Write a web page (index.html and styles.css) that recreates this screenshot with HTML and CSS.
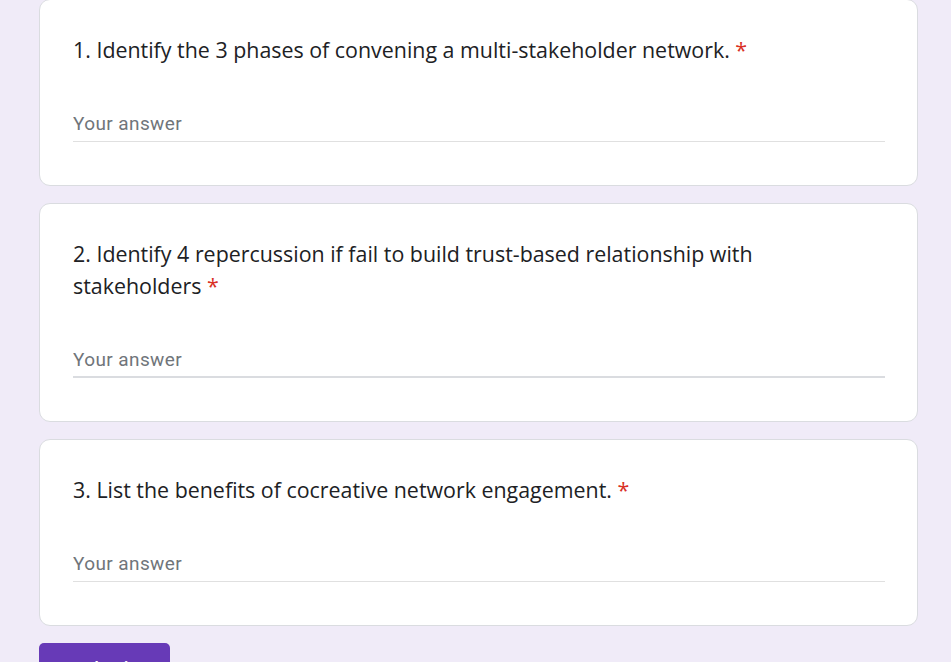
FILE: index.html
```html
<!DOCTYPE html>
<html lang="en">
<head>
    <meta charset="UTF-8">
    <meta name="viewport" content="width=device-width, initial-scale=1.0">
    <title>Multi-stakeholder Network Quiz</title>
    <link rel="stylesheet" href="styles.css">
</head>
<body>
    <form class="form" id="quiz-form">
        <div class="card">
            <div class="question">1. Identify the 3 phases of convening a multi-stakeholder network. <span class="required">*</span></div>
            <input class="answer" type="text" placeholder="Your answer">
        </div>

        <div class="card">
            <div class="question">2. Identify 4 repercussion if fail to build trust-based relationship with stakeholders <span class="required">*</span></div>
            <input class="answer answer-active" type="text" placeholder="Your answer">
        </div>

        <div class="card">
            <div class="question">3. List the benefits of cocreative network engagement. <span class="required">*</span></div>
            <input class="answer" type="text" placeholder="Your answer">
        </div>

        <button type="submit" class="btn-submit">Submit</button>
    </form>
</body>
</html>
```

FILE: styles.css
```css
/* Geral */
* {
    margin: 0;
    padding: 0;
    box-sizing: border-box;
}

body {
    background-color: #f0ebf8;
    color: #202124;
    font-family: 'Open Sans', 'Liberation Sans', sans-serif;
}

.form {
    width: 879px;
    margin-left: 39px;
    margin-top: -1px;
    display: flex;
    flex-direction: column;
    gap: 17px;
    align-items: flex-start;
}

/* Cartões */
.card {
    width: 100%;
    background-color: #fff;
    border: 1px solid #dadce0;
    border-radius: 11px;
    padding: 32px 32px 32px 33px;
}

.question {
    font-size: 21.4px;
    line-height: 32px;
    padding: 2px 20px 0 0;
}

.required {
    color: #d93025;
}

.answer {
    display: block;
    width: 100%;
    margin: 46px 0 11px;
    padding: 0 0 5px;
    border: none;
    border-bottom: 1px solid #e0e0e0;
    outline: none;
    background: transparent;
    font-family: Roboto, 'Liberation Sans', sans-serif;
    font-size: 19px;
    line-height: 24px;
    letter-spacing: 0.4px;
    color: #202124;
}

.answer::placeholder {
    color: #70757a;
}

.answer-active {
    border-bottom: 2px solid #dadce0;
    padding-bottom: 4px;
}

/* Botão */
.btn-submit {
    width: 131px;
    height: 48px;
    background-color: #673ab7;
    color: #fff;
    border: none;
    border-radius: 5px;
    font-family: 'Open Sans', 'Liberation Sans', sans-serif;
    font-size: 18.67px;
    font-weight: 600;
    padding: 0 33px;
    text-align: left;
}
```
